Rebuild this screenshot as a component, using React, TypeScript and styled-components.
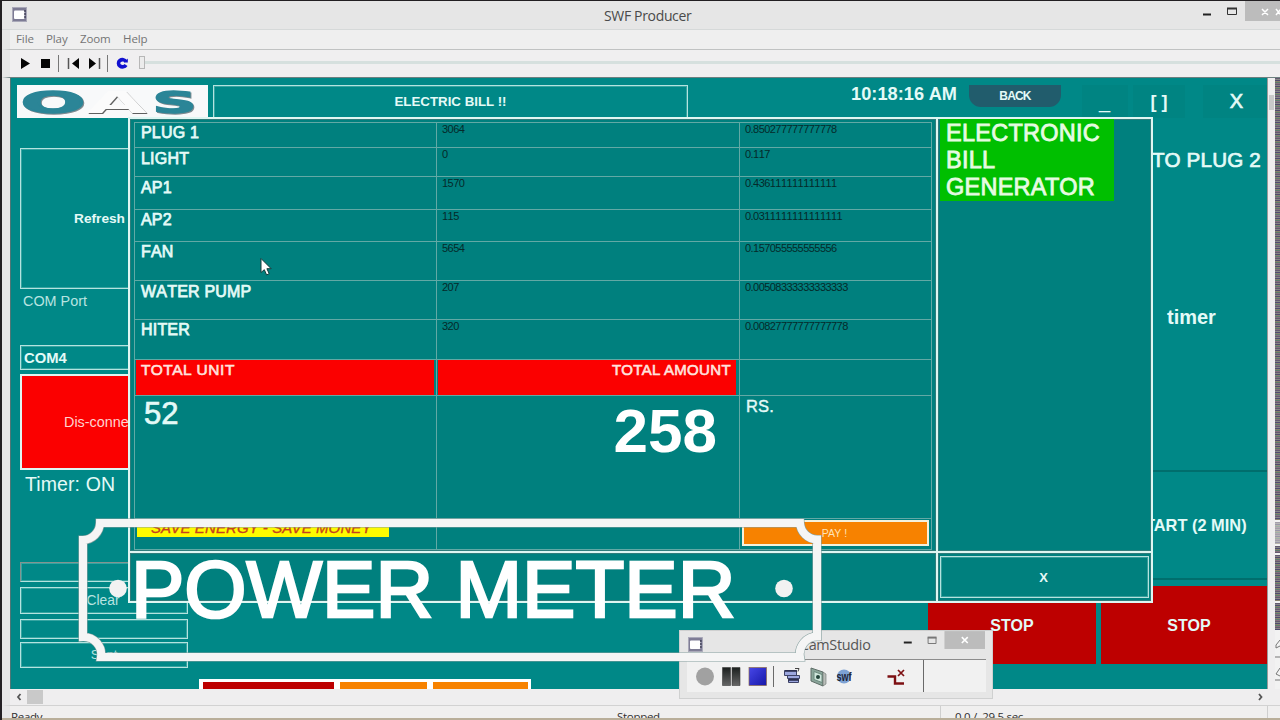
import React from 'react';
import styled, { createGlobalStyle, css } from 'styled-components';

const Global = createGlobalStyle`
  * { box-sizing: border-box; }
  body { margin: 0; background: #221f22; font-family: 'Liberation Sans', Arial, sans-serif; }
`;

const ui = css`font-family: 'Open Sans', 'Noto Sans', sans-serif;`;
const pale = '#dff6f2';
const thinEdge = css`
  border: 1px solid #b4e3df;
  box-shadow: inset 0 0 0 1px rgba(180, 227, 223, 0.3);
`;

const Screen = styled.div`
  position: relative;
  width: 1280px;
  height: 720px;
  overflow: hidden;
  display: flex;
  flex-direction: column;
  background: #221f22;
  padding: 1px 0 0 2px;
`;

const Text = styled.span<{ $size: number; $bold?: boolean; $stroke?: number; $spacing?: number; $color?: string }>`
  font-size: ${p => p.$size}px;
  font-weight: ${p => (p.$bold ? 700 : 400)};
  letter-spacing: ${p => p.$spacing ?? 0}px;
  color: ${p => p.$color ?? '#e4faf7'};
  -webkit-text-stroke: ${p => p.$stroke ?? 0}px currentColor;
  white-space: nowrap;
  line-height: 20px;
`;

/* ---------- producer window chrome ---------- */

const TitleBar = styled.header`
  ${ui}
  display: flex;
  flex: none;
  height: 29px;
  background: #e6e6e6;
  border-bottom: 1px solid #d6d9d9;
  padding-left: 10px;
`;
const WindowIcon = styled.svg`
  width: 15px;
  height: 15px;
  margin-top: 6px;
`;
const Title = styled.div`
  flex: 1;
  padding-left: 577px;
  line-height: 29px;
  font-size: 14px;
  letter-spacing: -0.34px;
  color: #4a4a4a;
`;
const Controls = styled.svg`
  width: 80px;
  height: 20px;
`;
const MenuBar = styled.nav`
  ${ui}
  flex: none;
  display: flex;
  height: 20px;
  padding-left: 6px;
  background: #efefef;
  border-left: 8px solid #e6e6e6;
  border-bottom: 1px solid #c0c2c2;
  font-size: 11.5px;
  line-height: 18px;
  color: #747474;
`;
const MenuItem = styled.span<{ $w: number }>`
  width: ${p => p.$w}px;
  letter-spacing: -0.1px;
`;
const ToolBar = styled.div`
  flex: none;
  height: 28px;
  background: #f0eff0;
  border-left: 8px solid #e6e6e6;
  border-bottom: 1px solid #6d8080;
`;
const Main = styled.div`
  display: flex;
  height: 611px;
  flex: none;
  border-left: 8px solid #e6e6e6;
`;
const Canvas = styled.main`
  width: 1257px;
  background: #008887;
  border-left: 1px solid #4f7777;
  display: flex;
  flex-direction: column;
  overflow: hidden;
`;
const VScroll = styled.div`
  width: 8px;
  background: #efeeef;
  padding: 17px 1px 0;
  border-left: 1px solid #9a9a9a;
`;
const VThumb = styled.div`
  height: 15px;
  background: #c9c9c9;
`;
const Noise = styled.div`
  width: 5px;
  display: flex;
  flex-direction: column;
  overflow: hidden;
  background: #f2f2f2;
`;
const Static = styled.div<{ $h: number; $light?: boolean }>`
  height: ${p => p.$h}px;
  flex: none;
  margin-bottom: 2px;
  opacity: ${p => (p.$light ? 0.55 : 1)};
  background: repeating-linear-gradient(180deg, #645a70 0 1px, #868686 1px 2px, #504b70 2px 3px, #88816e 3px 4px, #5b7b6e 4px 5px, #86707e 5px 6px);
`;
const HScroll = styled.div`
  flex: none;
  display: flex;
  justify-content: space-between;
  height: 16px;
  background: #efeeef;
  border-left: 8px solid #e6e6e6;
  padding: 1px 15px 0 5px;
`;
const StatusBar = styled.footer`
  ${ui}
  flex: none;
  display: flex;
  height: 13px;
  overflow: hidden;
  background: #f0efef;
  border-left: 8px solid #e6e6e6;
  border-top: 1px solid #d2d2d2;
  font-size: 11.5px;
  line-height: 21px;
  color: #303030;
`;
const StatusCell = styled.span<{ $w: number; $pad: number; $line?: boolean }>`
  width: ${p => p.$w}px;
  padding-left: ${p => p.$pad}px;
  white-space: pre;
  border-left: ${p => (p.$line ? '1px solid #cfcfcf' : '0')};
  letter-spacing: -0.3px;
`;
const TaskStrip = styled.div`
  height: 2px;
  flex: none;
  background: #b9ae99;
`;

/* ---------- automation app ---------- */

const AppHeader = styled.div`
  height: 40px;
  flex: none;
  display: flex;
  align-items: flex-start;
  padding: 7px 0 0 6px;
`;
const Logo = styled.svg`
  width: 191px;
  height: 33px;
  background: #f8f9fa;
`;
const LogoLetter = styled.text<{ $hollow?: boolean }>`
  font: 700 ${p => (p.$hollow ? 31 : 30)}px 'DejaVu Sans', sans-serif;
  fill: ${p => (p.$hollow ? '#fbfbfb' : '#2b8597')};
  stroke: ${p => (p.$hollow ? '#fbfbfb' : '#2b8597')};
  stroke-width: ${p => (p.$hollow ? 0 : 1.3)}px;
  filter: drop-shadow(1.5px 1px 0.6px ${p => (p.$hollow ? '#5f5f5f' : '#7d8a90')});
`;
const BillTitle = styled.div`
  ${thinEdge}
  width: 475px;
  height: 33px;
  margin-left: 5px;
  border-bottom: 0;
  display: flex;
  align-items: center;
  justify-content: center;
`;
const Clock = styled.div`
  width: 281px;
  padding-left: 163px;
  margin-top: -1px;
`;
const BackButton = styled.button`
  width: 92px;
  height: 22px;
  padding: 0;
  border: 0;
  border-radius: 0 0 12px 12px;
  background: #215c6c;
`;
const HeaderButton = styled.div<{ $w: number; $gap: number; $pad?: string }>`
  width: ${p => p.$w}px;
  height: 33px;
  margin-left: ${p => p.$gap}px;
  padding: ${p => p.$pad ?? 0};
  background: #008482;
  display: flex;
  align-items: center;
  justify-content: center;
`;
const AppBody = styled.div`
  flex: 1;
  display: flex;
`;
const LeftColumn = styled.aside`
  width: 177px;
  padding: 30px 0 0 9px;
  display: flex;
  flex-direction: column;
`;
const OutlineBox = styled.div<{ $h: number; $gap?: number; $dim?: boolean; $nudge?: number }>`
  ${thinEdge}
  height: ${p => p.$h}px;
  margin-top: ${p => p.$gap ?? 0}px;
  padding-right: ${p => p.$nudge ?? 0}px;
  flex: none;
  display: flex;
  align-items: center;
  justify-content: center;
  ${p => p.$dim && 'border-color: #84938f #84938f #b4e3df #84938f;'}
`;
const ComSelect = styled(OutlineBox)`
  justify-content: flex-start;
  padding-left: 3px;
`;
const SideText = styled.div<{ $h: number; $pad: number; $left: number }>`
  height: ${p => p.$h}px;
  padding: ${p => p.$pad}px 0 0 ${p => p.$left}px;
`;
const Disconnect = styled.div`
  height: 96px;
  margin-top: 4px;
  border: 2px solid ${pale};
  background: #fb0000;
  display: flex;
  align-items: center;
  padding-left: 42px;
`;
const Middle = styled.section`
  flex: 1;
  display: flex;
  align-items: flex-end;
  padding-left: 11px;
`;
const ActionStrip = styled.div`
  display: flex;
  gap: 6px;
  height: 10px;
  padding: 3px 3px 0 4px;
  background: #fff;
`;
const Action = styled.div<{ $w: number; $color: string }>`
  width: ${p => p.$w}px;
  background: ${p => p.$color};
`;
const PlugOne = styled.section`
  width: 173px;
  padding-top: 468px;
`;
const PlugTwo = styled.section`
  width: 166px;
  display: flex;
  flex-direction: column;
`;
const PlugLabel = styled.div<{ $h: number; $left: number; $top: number; $line?: boolean }>`
  height: ${p => p.$h}px;
  flex: none;
  padding: ${p => p.$top}px 0 0 ${p => p.$left}px;
  border-top: ${p => (p.$line ? '2px solid #006e6d' : '0')};
`;
const Stop = styled.button<{ $w: number; $shift: number }>`
  width: ${p => p.$w}px;
  height: 78px;
  border: 0;
  padding: 2px 0 0 ${p => p.$shift}px;
  background: #bd0000;
`;

/* ---------- bill dialog ---------- */

const Dialog = styled.section`
  position: absolute;
  left: 128px;
  top: 117px;
  width: 1025px;
  height: 486px;
  border: 2px solid ${pale};
  background: ${pale};
  display: grid;
  grid-template-columns: 806px 1fr;
  grid-template-rows: 432px 1fr;
  gap: 2px;
`;
const Pane = styled.div<{ $pad?: string }>`
  background: #00807e;
  padding: ${p => p.$pad ?? 0};
  box-shadow: inset 0 0 0 1px #2f7d7b;
`;
const Table = styled.div`
  width: 798px;
  height: 428px;
  display: grid;
  grid-template-columns: 302px 303px 192px;
  grid-template-rows: 25px 29px 33px 32px 39px 39px 40px 36px 123px 31px;
  border: solid #62a9a5;
  border-width: 0 1px 1px 0;
`;
const Cell = styled.div<{ $pad?: string; $right?: boolean }>`
  border: solid #62a9a5;
  border-width: 1px 0 0 1px;
  padding: ${p => p.$pad ?? 0};
  line-height: 20px;
  display: flex;
  align-items: flex-start;
  justify-content: ${p => (p.$right ? 'flex-end' : 'flex-start')};
`;
const Lift = styled.div<{ $by: number }>`
  display: flex;
  margin-top: -${p => p.$by}px;
  font-kerning: none;
`;
const RedFill = styled.div<{ $right?: boolean }>`
  flex: 1;
  height: 35px;
  padding: 0 5px;
  background: #fb0000;
  line-height: 19px;
  text-align: ${p => (p.$right ? 'right' : 'left')};
`;
const Slogan = styled.div`
  width: 252px;
  height: 18px;
  padding-left: 14px;
  background: #fdfb00;
  font: italic 15px/17px 'Liberation Sans', sans-serif;
  letter-spacing: 0.1px;
  -webkit-text-stroke: 0.3px currentColor;
  color: #c8401c;
  white-space: nowrap;
`;
const Pay = styled.button`
  width: 187px;
  height: 26px;
  padding: 0 2px 0 0;
  border: 2px solid #f4f1dc;
  background: #f78200;
  display: flex;
  align-items: center;
  justify-content: center;
`;
const BillHeading = styled.h1`
  margin: 0 0 0 2px;
  width: 174px;
  height: 82px;
  padding: 1px 0 0 6px;
  background: #00bf00;
  color: #e6fbe2;
  font-size: 23.5px;
  font-weight: 400;
  line-height: 27px;
  letter-spacing: 0.25px;
  -webkit-text-stroke: 0.8px currentColor;
`;
const CloseBill = styled.button`
  ${thinEdge}
  width: 209px;
  height: 42px;
  padding: 2px 2px 0 0;
  background: transparent;
`;

/* ---------- floating layers ---------- */

const Cam = styled.section`
  ${ui}
  position: absolute;
  left: 679px;
  top: 630px;
  width: 314px;
  height: 69px;
  padding: 0 7px;
  background: #e6e6e6;
  border: 1px solid #cfd0d0;
`;
const CamTitle = styled.div`
  height: 28px;
  display: flex;
  padding-left: 1px;
`;
const CamName = styled.div`
  flex: none;
  width: 80px;
  margin: 0 0 0 97px;
  font-size: 14.4px;
  letter-spacing: -0.3px;
  line-height: 27px;
  color: #555;
`;
const CamTools = styled.svg`
  display: block;
  width: 299px;
  height: 33px;
  background: #f1f1f1;
`;
const Banner = styled.div`
  position: absolute;
  left: 78px;
  top: 518px;
  width: 744px;
  height: 144px;
  display: grid;
`;
const BannerFrame = styled.svg`
  grid-area: 1 / 1;
`;
const BannerText = styled.div`
  grid-area: 1 / 1;
  padding: 25px 0 0 53px;
  font-size: 80px;
  line-height: 93px;
  white-space: nowrap;
  color: #fff;
  -webkit-text-stroke: 2.6px #fff;
  text-shadow: 0 1px 1px #6f8a8a;
`;
const Pointer = styled.svg`
  position: absolute;
  left: 259px;
  top: 257px;
  width: 14px;
  height: 20px;
`;

const FrameIcon = () => (
  <WindowIcon viewBox="0 0 15 15">
    <rect x="0.5" y="0.5" width="14" height="14" fill="#7d7b94" stroke="#a9a8b8" />
    <rect x="2" y="3.500" width="10.500" height="8.500" rx="1" fill="#fff" />
    <path d="M13 3v9" stroke="#33324a" strokeWidth="1.200" strokeDasharray="2 1" />
  </WindowIcon>
);

const readings: [string, string, string, number][] = [
  ['PLUG 1', '3064', '0.850277777777778', 1],
  ['LIGHT', '0', '0.117', 0],
  ['AP1', '1570', '0.436111111111111', 0],
  ['AP2', '115', '0.0311111111111111', 1],
  ['FAN', '5654', '0.157055555555556', 1],
  ['WATER PUMP', '207', '0.00508333333333333', 0],
  ['HITER', '320', '0.00827777777777778', 1],
];

const Value = ({ children }: { children: string }) => (
  <Lift $by={4}>
    <Text $size={11} $spacing={-0.55} $color="#052a2a">{children}</Text>
  </Lift>
);

const plate =
  'M100 523H800A17.500 17.500 0 0 0 817 539.500V636.500A17.500 17.500 0 0 0 800 657H101A17.500 17.500 0 0 0 83 637V540A17.500 17.500 0 0 0 100 523z';

export default function App() {
  return (
    <Screen>
      <Global />
      <TitleBar>
        <FrameIcon />
        <Title>SWF Producer</Title>
        <Controls viewBox="1200 1 80 20">
          <path d="M1203 14.500h8" stroke="#222" strokeWidth="2" />
          <path d="M1227.500 8.500h9v6h-9z" fill="none" stroke="#333" />
          <path d="M1227 8.500h10" stroke="#333" strokeWidth="2" />
          <rect x="1245" y="1" width="35" height="20" fill="#bcbcbc" />
          <path d="M1262 9l6 6m0-6l-6 6M1276 9l5 6m0-6l-5 6" stroke="#fff" strokeWidth="1.500" />
        </Controls>
      </TitleBar>
      <MenuBar>
        <MenuItem $w={30}>File</MenuItem>
        <MenuItem $w={34}>Play</MenuItem>
        <MenuItem $w={43}>Zoom</MenuItem>
        <MenuItem $w={30}>Help</MenuItem>
      </MenuBar>
      <ToolBar>
        <svg width="1270" height="27" viewBox="10 50 1270 27">
          <path d="M21 58v11l9-5.500zM41 59h9v9h-9zM79 58v11l-7-5.500zM89 58v11l7-5.500z" fill="#050505" />
          <path d="M68.500 58v11M99.500 58v11" stroke="#555" strokeWidth="1.500" />
          <path d="M58.500 55v17M107.500 55v17" stroke="#777" />
          <path d="M126 61.500A4 3.600 0 1 0 126 65" fill="none" stroke="#1111d0" strokeWidth="3.600" />
          <path d="M124 62.500h3.800v-4z" fill="#1111d0" />
          <path d="M144 62.500H1280" stroke="#d6e0de" strokeWidth="3" />
          <rect x="139.500" y="56.500" width="5" height="12" fill="#ececec" stroke="#b7b7b7" />
        </svg>
      </ToolBar>

      <Main>
        <Canvas>
          <AppHeader>
            <Logo viewBox="17 85 191 33">
              <LogoLetter x="20.500" y="113" textLength="65" lengthAdjust="spacingAndGlyphs">O</LogoLetter>
              <LogoLetter $hollow x="87" y="112.500" textLength="60" lengthAdjust="spacingAndGlyphs">A</LogoLetter>
              <LogoLetter x="152.500" y="113" textLength="44" lengthAdjust="spacingAndGlyphs">S</LogoLetter>
            </Logo>
            <BillTitle><Text $size={13.3} $bold>ELECTRIC BILL !!</Text></BillTitle>
            <Clock><Text $size={18.2} $bold $spacing={0.05}>10:18:16 AM</Text></Clock>
            <BackButton><Text $size={12} $bold $spacing={-0.8}>BACK</Text></BackButton>
            <HeaderButton $w={46} $gap={21} $pad="0 1px 2px 0"><Text $size={20}>_</Text></HeaderButton>
            <HeaderButton $w={52} $gap={5}><Text $size={18} $bold>[ ]</Text></HeaderButton>
            <HeaderButton $w={64} $gap={18} $pad="0 0 1px 3px"><Text $size={20} $stroke={0.7}>X</Text></HeaderButton>
          </AppHeader>
          <AppBody>
            <LeftColumn>
              <OutlineBox $h={141} $nudge={9}><Text $size={13.7} $bold>Refresh</Text></OutlineBox>
              <SideText $h={56} $pad={2} $left={3}><Text $size={14.4} $color="#b9e4e1">COM Port</Text></SideText>
              <ComSelect $h={25}><Text $size={14.8} $bold>COM4</Text></ComSelect>
              <Disconnect><Text $size={14.4} $color="#ffd2cf">Dis-connect</Text></Disconnect>
              <SideText $h={92} $pad={4} $left={5}><Text $size={19.5} $spacing={0.1}>Timer: ON</Text></SideText>
              <OutlineBox $h={20} $dim />
              <OutlineBox $h={27} $gap={5} $nudge={2}><Text $size={13.8} $color="#b9e4e1">Clear</Text></OutlineBox>
              <OutlineBox $h={20} $gap={5} />
              <OutlineBox $h={26} $gap={3}><Text $size={13} $color="#b9e4e1">Sent</Text></OutlineBox>
            </LeftColumn>
            <Middle>
              <ActionStrip>
                <Action $w={131} $color="#bd0000" />
                <Action $w={87} $color="#f78200" />
                <Action $w={95} $color="#f78200" />
              </ActionStrip>
            </Middle>
            <PlugOne>
              <Stop $w={168} $shift={0}><Text $size={16} $bold>STOP</Text></Stop>
            </PlugOne>
            <PlugTwo>
              <PlugLabel $h={188} $left={51} $top={32}><Text $size={20.6} $stroke={0.7} $spacing={0.2}>TO PLUG 2</Text></PlugLabel>
              <PlugLabel $h={164} $left={66} $top={1}><Text $size={20} $bold>timer</Text></PlugLabel>
              <PlugLabel $h={108} $left={33} $top={43} $line><Text $size={16.4} $bold>START (2 MIN)</Text></PlugLabel>
              <PlugLabel $h={8} $left={0} $top={0} $line />
              <Stop $w={166} $shift={10}><Text $size={16} $bold>STOP</Text></Stop>
            </PlugTwo>
          </AppBody>
        </Canvas>
        <VScroll><VThumb /></VScroll>
        <Noise>
          <Static $h={442} />
          <Static $h={22} $light />
          <Static $h={7} />
          <Static $h={46} />
          <Static $h={27} />
          <svg width="5" height="56" viewBox="0 0 5 56">
            <path d="M5 8L1 13v3l4-2M0 25h5M5 36l-4 6 4 2M0 48h5" stroke="#777" fill="none" />
          </svg>
        </Noise>
      </Main>

      <HScroll>
        <svg width="30" height="14" viewBox="0 0 30 14">
          <path d="M5.500 4L3 7l2.500 3" fill="none" stroke="#555" strokeWidth="1.800" />
          <rect x="12" y="0" width="16" height="14" fill="#c9c9c9" />
        </svg>
        <svg width="8" height="14" viewBox="0 0 8 14">
          <path d="M2 4l2.500 3L2 10" fill="none" stroke="#555" strokeWidth="1.800" />
        </svg>
      </HScroll>
      <StatusBar>
        <StatusCell $w={607} $pad={1}>Ready</StatusCell>
        <StatusCell $w={323} $pad={0}>Stopped</StatusCell>
        <StatusCell $w={327} $pad={14} $line>{'0.0 /  29.5 sec'}</StatusCell>
        <StatusCell $w={12} $pad={0} $line />
      </StatusBar>
      <TaskStrip />

      <Dialog>
        <Pane $pad="3px 0 0 4px">
          <Table>
            {readings.map(([name, units, amount, lift]) => (
              <React.Fragment key={name}>
                <Cell $pad="1px 0 0 6px">
                  <Lift $by={lift}><Text $size={16} $stroke={0.75} $spacing={0.2}>{name}</Text></Lift>
                </Cell>
                <Cell $pad="0 0 0 5px"><Value>{units}</Value></Cell>
                <Cell $pad="0 0 0 5px"><Value>{amount}</Value></Cell>
              </React.Fragment>
            ))}
            <Cell $pad="0 2px 0 1px"><RedFill><Text $size={15.5} $stroke={0.6} $spacing={0.55} $color="#ffe3df">TOTAL UNIT</Text></RedFill></Cell>
            <Cell $pad="0 3px 0 1px"><RedFill $right><Text $size={15} $stroke={0.6} $spacing={0.35} $color="#ffe3df">TOTAL AMOUNT</Text></RedFill></Cell>
            <Cell />
            <Cell $pad="8px 0 0 9px"><Text $size={31} $stroke={0.7}>52</Text></Cell>
            <Cell $pad="25px 22px 0 0" $right><Text $size={62} $bold $color="#fff">258</Text></Cell>
            <Cell $pad="0 0 0 6px"><Text $size={16.5} $stroke={0.4} $spacing={0.2}>RS.</Text></Cell>
            <Cell $pad="0 0 0 2px"><Slogan>SAVE ENERGY - SAVE MONEY</Slogan></Cell>
            <Cell />
            <Cell $pad="1px 0 0 2px"><Pay><Text $size={10.5} $color="#ffe2b8" $spacing={0.1}>PAY !</Text></Pay></Cell>
          </Table>
        </Pane>
        <Pane><BillHeading>ELECTRONIC<br />BILL<br />GENERATOR</BillHeading></Pane>
        <Pane />
        <Pane $pad="3px 0 0 2px"><CloseBill><Text $size={13} $bold>X</Text></CloseBill></Pane>
      </Dialog>

      <Pointer viewBox="0 0 14 20">
        <path d="M2 1.500v14l3.300-2.800 2.300 5.200 2.600-1.200-2.300-5h4.300z" fill="#fff" stroke="#123b3b" />
      </Pointer>

      <Cam>
        <CamTitle>
          <FrameIcon />
          <CamName>CamStudio</CamName>
          <svg width="106" height="28" viewBox="880 631 106 28">
            <path d="M904 642.500h8" stroke="#222" strokeWidth="2" />
            <path d="M928.500 637.500h8v6h-8z" fill="none" stroke="#777" />
            <path d="M928 637.500h9" stroke="#777" strokeWidth="2" />
            <rect x="945" y="631" width="41" height="18" fill="#bcbcbc" />
            <path d="M962.500 637l6 6m0-6l-6 6" stroke="#fff" strokeWidth="1.600" />
          </svg>
        </CamTitle>
        <CamTools viewBox="687 659 299 33">
          <defs>
            <linearGradient id="pause" x2="0" y2="1"><stop stopColor="#1b1f1e" /><stop offset="1" stopColor="#656565" /></linearGradient>
            <linearGradient id="stop" x2="1" y2="1"><stop stopColor="#4747e8" /><stop offset="1" stopColor="#1717a8" /></linearGradient>
          </defs>
          <path d="M687 659.500h299" stroke="#8c8c8c" />
          <circle cx="705" cy="676.500" r="9" fill="#a1a1a1" />
          <path d="M722.500 667.500h8v18h-8zM732 667.500h8v18h-8z" fill="url(#pause)" stroke="#3a3a3a" strokeWidth=".6" />
          <rect x="749" y="667.500" width="17.500" height="18" fill="url(#stop)" stroke="#8d6b4f" strokeWidth=".7" />
          <path d="M773.500 666v21M923.500 660v32" stroke="#6a6a6a" />
          <path d="M784.500 670.500h12v5h-12zM787.500 675.500h12v3h-12zM788.500 679.500h10v3h-10z" fill="#9ca7df" stroke="#3d4266" />
          <path d="M785 671h12M788 680h11" stroke="#272b4b" strokeWidth="1.500" />
          <path d="M795 668.500h4l-1 3" fill="none" stroke="#444" />
          <path d="M811 668l12 4v14l-12-5z" fill="#8aa59a" stroke="#5f6e68" />
          <path d="M814 671.500l8 3v8l-8-3z" fill="#cfe6dc" stroke="#6c8a7e" />
          <path d="M823 672l3 2v10l-3 2z" fill="#b9beb9" stroke="#68716c" strokeWidth=".6" />
          <circle cx="818" cy="677" r="2" fill="#23443a" />
          <circle cx="844" cy="676.500" r="7" fill="#7da2d4" />
          <text x="836.500" y="681" fontFamily="Liberation Sans" fontWeight="700" fontSize="12" textLength="15" lengthAdjust="spacingAndGlyphs" fill="#1d2538">swf</text>
          <path d="M887.500 676.500h7.500v7h9" fill="none" stroke="#7d1013" strokeWidth="2.400" />
          <path d="M898 670l6 6m0-6l-6 6" stroke="#7d1013" strokeWidth="1.700" />
        </CamTools>
      </Cam>

      <Banner>
        <BannerFrame width="744" height="144" viewBox="78 518 744 144">
          <path d={plate} fill="none" stroke="#86a09f" strokeWidth="9.200" />
          <path d={plate} fill="none" stroke="#f5f5f5" strokeWidth="8" />
          <circle cx="118" cy="588.500" r="8.800" fill="#f2f2f2" />
          <circle cx="784" cy="588.500" r="8.800" fill="#f2f2f2" />
        </BannerFrame>
        <BannerText>POWER METER</BannerText>
      </Banner>
    </Screen>
  );
}
